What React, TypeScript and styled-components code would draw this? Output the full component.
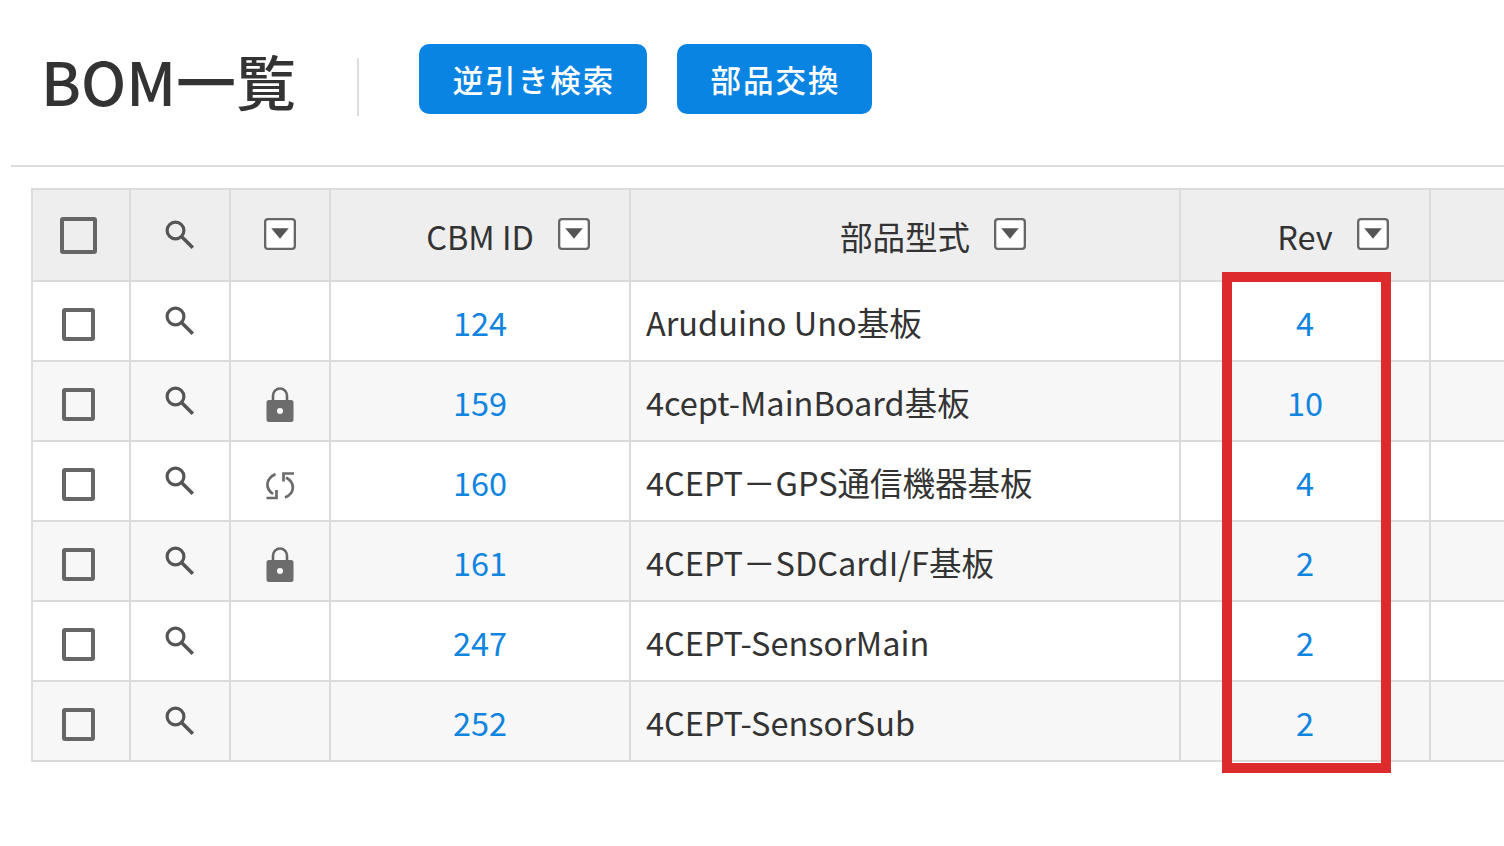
import React from "react";
import styled, { createGlobalStyle } from "styled-components";

interface BomRow {
  id: number;
  model: string;
  rev: number;
  state?: "lock" | "sync";
}

const rows: BomRow[] = [
  { id: 124, model: "Aruduino Uno基板", rev: 4 },
  { id: 159, model: "4cept-MainBoard基板", rev: 10, state: "lock" },
  { id: 160, model: "4CEPT－GPS通信機器基板", rev: 4, state: "sync" },
  { id: 161, model: "4CEPT－SDCardI/F基板", rev: 2, state: "lock" },
  { id: 247, model: "4CEPT-SensorMain", rev: 2 },
  { id: 252, model: "4CEPT-SensorSub", rev: 2 },
];

const GlobalStyle = createGlobalStyle`
  html, body {
    margin: 0;
    background: #fff;
    overflow: hidden;
  }
  body {
    font-family: "Noto Sans CJK JP", "Noto Sans", sans-serif;
    color: #333;
  }
`;

const Page = styled.div`
  position: relative;
  width: 1504px;
  height: 846px;
  overflow: hidden;
  padding-left: 11px;
  box-sizing: border-box;
`;

const Header = styled.header`
  display: flex;
  align-items: flex-start;
  height: 167px;
  box-sizing: border-box;
  padding: 44px 0 0 30px;
  border-bottom: 2px solid #ddd;
`;

const Title = styled.h1`
  margin: 0;
  width: 316px;
  height: 72px;
  font-size: 60px;
  line-height: 72px;
  font-weight: 500;
  color: #333;
  white-space: nowrap;
`;

const Divider = styled.div`
  width: 2px;
  height: 58px;
  margin: 14px 60px 0 0;
  background: #ddd;
`;

const Actions = styled.div`
  display: flex;
  gap: 30px;
`;

const ActionButton = styled.button<{ $width: number }>`
  width: ${(p) => p.$width}px;
  height: 70px;
  padding: 0 0 0 2px;
  border: 0;
  border-radius: 10px;
  background: #0984e3;
  color: #fff;
  font-family: inherit;
  font-size: 30.5px;
  font-weight: 500;
  letter-spacing: 2px;
`;

const Table = styled.table`
  table-layout: fixed;
  width: 1700px;
  margin: 21px 0 0 20px;
  border-collapse: separate;
  border-spacing: 0;
  border-top: 2px solid #dbdbdb;
  border-left: 2px solid #dbdbdb;
`;

const HeadCell = styled.th`
  height: 92px;
  padding: 0;
  box-sizing: border-box;
  background: #eee;
  border-right: 2px solid #dbdbdb;
  border-bottom: 2px solid #dbdbdb;
  font-size: 32.5px;
  font-weight: 400;
  color: #333;
  text-align: center;
  vertical-align: middle;
`;

const HeadLabel = styled.span`
  position: relative;
  display: inline-block;
  line-height: 44px;
`;

const FilterSlot = styled.span`
  position: absolute;
  left: calc(100% + 24px);
  top: 4px;
  display: block;
`;

const BodyRow = styled.tr<{ $striped: boolean }>`
  background: ${(p) => (p.$striped ? "#f7f7f7" : "#fff")};
`;

const Cell = styled.td<{ $left?: boolean }>`
  height: 80px;
  padding: ${(p) => (p.$left ? "2px 0 0 15px" : "2px 0 0")};
  box-sizing: border-box;
  border-right: 2px solid #dbdbdb;
  border-bottom: 2px solid #dbdbdb;
  font-size: 32.5px;
  line-height: 44px;
  color: #333;
  text-align: ${(p) => (p.$left ? "left" : "center")};
  vertical-align: middle;
  white-space: nowrap;
`;

const Link = styled.a`
  color: #0f85e0;
  text-decoration: none;
`;

const CheckBox = styled.span<{ $size: number; $left: number; $top: number }>`
  display: block;
  width: ${(p) => p.$size}px;
  height: ${(p) => p.$size}px;
  margin: ${(p) => p.$top}px 0 0 ${(p) => p.$left}px;
  box-sizing: border-box;
  border: 4px solid #666;
  border-radius: 3px;
`;

const IconWrap = styled.span<{ $shift: number }>`
  display: block;
  line-height: 0;
  transform: translateY(${(p) => p.$shift}px);
`;

const SearchIcon = () => (
  <svg width="30" height="30" viewBox="0 0 30 30" fill="none" stroke="#555" strokeWidth="3.2">
    <circle cx="10.5" cy="10.5" r="8.4" />
    <path d="M16.5 16.5 L27.8 27.8" strokeWidth="3.6" />
  </svg>
);

const FilterIcon = () => (
  <svg width="32" height="32" viewBox="0 0 33 33" style={{ display: "block" }}>
    <rect x="1.2" y="1.2" width="30.6" height="30.6" rx="3" fill="#fff" stroke="#666" strokeWidth="2.4" />
    <path d="M7.5 10.5 H25.5 L16.5 21.5 Z" fill="#555" />
  </svg>
);

const LockIcon = () => (
  <svg width="30" height="36" viewBox="0 0 30 36" fill="none">
    <path d="M8 14 V8.5 a7 7 0 0 1 14 0 V14" stroke="#666" strokeWidth="2.6" />
    <rect x="1.5" y="13" width="27" height="22" rx="2.5" fill="#6c6c6c" />
    <circle cx="15" cy="24" r="3" fill="#fff" />
  </svg>
);

const SyncIcon = () => (
  <svg width="30" height="30" viewBox="0 0 30 30" fill="none" stroke="#6c6c6c" strokeWidth="2.7">
    <path d="M10.5 3 C1 7.5 -0.5 17 8 23" />
    <path d="M1.5 27 H11.5 V19" />
    <path d="M20 26.5 C29.5 22.5 31 12 21 6.5" />
    <path d="M29 2.5 H18.5 V10.5" />
  </svg>
);

const Highlight = styled.div`
  position: absolute;
  left: 1222px;
  top: 272px;
  width: 169px;
  height: 501px;
  box-sizing: border-box;
  border: 10px solid #dd2a2c;
  pointer-events: none;
`;

const CenteredFilter = styled.span`
  display: inline-block;
`;

export default function App() {
  return (
    <Page>
      <GlobalStyle />
      <Header>
        <Title>BOM一覧</Title>
        <Divider />
        <Actions>
          <ActionButton $width={228}>逆引き検索</ActionButton>
          <ActionButton $width={195}>部品交換</ActionButton>
        </Actions>
      </Header>
      <Table>
        <colgroup>
          <col style={{ width: 98 }} />
          <col style={{ width: 100 }} />
          <col style={{ width: 100 }} />
          <col style={{ width: 300 }} />
          <col style={{ width: 550 }} />
          <col style={{ width: 250 }} />
          <col />
        </colgroup>
        <thead>
          <tr>
            <HeadCell>
              <CheckBox $size={37} $left={27} $top={0} />
            </HeadCell>
            <HeadCell>
              <IconWrap $shift={0}>
                <SearchIcon />
              </IconWrap>
            </HeadCell>
            <HeadCell>
              <IconWrap $shift={-1}>
                <CenteredFilter>
                  <FilterIcon />
                </CenteredFilter>
              </IconWrap>
            </HeadCell>
            {["CBM ID", "部品型式", "Rev"].map((label) => (
              <HeadCell key={label}>
                <HeadLabel>
                  {label}
                  <FilterSlot>
                    <FilterIcon />
                  </FilterSlot>
                </HeadLabel>
              </HeadCell>
            ))}
            <HeadCell />
          </tr>
        </thead>
        <tbody>
          {rows.map((row, i) => (
            <BodyRow key={row.id} $striped={i % 2 === 1}>
              <Cell>
                <CheckBox $size={33} $left={29} $top={5} />
              </Cell>
              <Cell>
                <IconWrap $shift={-1}>
                  <SearchIcon />
                </IconWrap>
              </Cell>
              <Cell>
                {row.state === "lock" && (
                  <IconWrap $shift={3}>
                    <LockIcon />
                  </IconWrap>
                )}
                {row.state === "sync" && (
                  <IconWrap $shift={4}>
                    <SyncIcon />
                  </IconWrap>
                )}
              </Cell>
              <Cell>
                <Link>{row.id}</Link>
              </Cell>
              <Cell $left>{row.model}</Cell>
              <Cell>
                <Link>{row.rev}</Link>
              </Cell>
              <Cell />
            </BodyRow>
          ))}
        </tbody>
      </Table>
      <Highlight />
    </Page>
  );
}
